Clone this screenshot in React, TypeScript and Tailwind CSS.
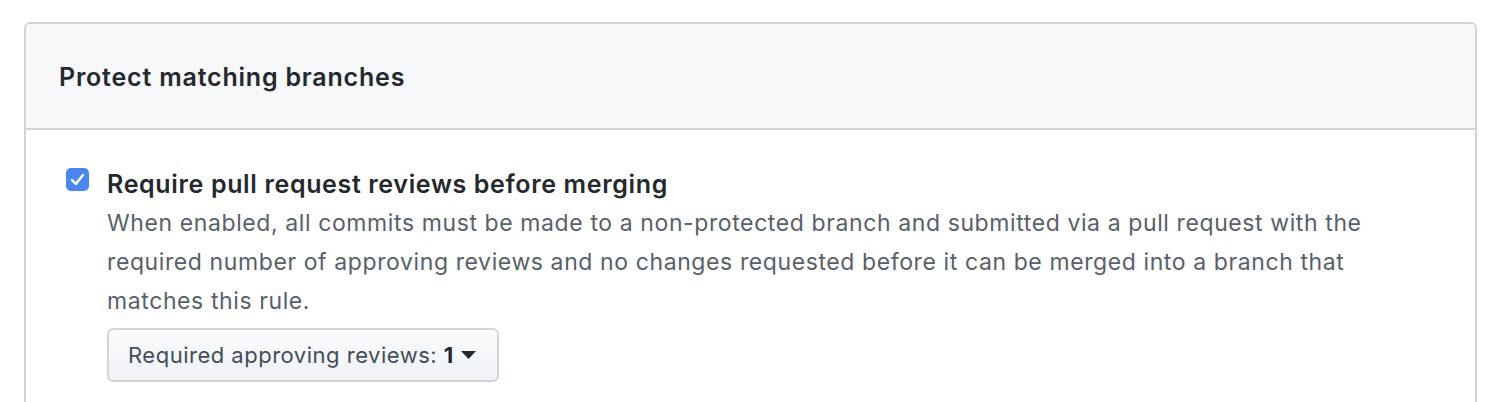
export default function App() {
  return (
    <div className="min-h-screen bg-white pt-[22px] pl-[24px] pr-[15px] font-['Inter',sans-serif] antialiased">
      <div className="rounded-t-[6px] border-2 border-b-0 border-[#d1d5da] overflow-hidden">
        {/* Header */}
        <div className="h-[106px] flex items-center px-[33px] bg-[#f6f8fa] border-b-2 border-[#d1d5da]">
          <h2 className="pt-[4px] text-[25px] tracking-[0.8px] font-semibold text-[#24292e]">Protect matching branches</h2>
        </div>

        {/* Body */}
        <div className="pt-[35px] pl-[40px] pr-[40px] pb-[40px] bg-white">
          <div className="flex gap-[18px]">
            <div className="pt-[3px]">
              <div className="w-[23px] h-[23px] rounded-[5px] bg-[#4a86f0] flex items-center justify-center">
                <svg width="19" height="19" viewBox="0 0 16 16" fill="none">
                  <path d="M3.4 8.6 L6.6 11.7 L12.6 4.2" stroke="white" strokeWidth="2.1" strokeLinecap="round" strokeLinejoin="round" />
                </svg>
              </div>
            </div>
            <div className="flex-1">
              <div className="text-[25px] leading-[38px] tracking-[0.65px] font-semibold text-[#24292e]">
                Require pull request reviews before merging
              </div>
              <p className="mt-[1px] text-[23px] leading-[39px] tracking-[0.6px] text-[#586069] max-w-[1300px]">
                When enabled, all commits must be made to a non-protected branch and submitted via a pull request with the required number of approving reviews and no changes requested before it can be merged into a branch that matches this rule.
              </p>
              <button className="mt-[7px] h-[54px] w-[392px] flex items-center pl-[19px] border-2 border-[#d1d5da] rounded-[6px] bg-gradient-to-b from-[#fafbfc] to-[#eff3f6] text-[22px] tracking-[0.5px] text-[#444d56]">
                <span>Required approving reviews:&nbsp;</span>
                <span className="font-bold text-[#24292e]">1</span>
                <svg className="ml-[7px]" width="15" height="8" viewBox="0 0 15 8">
                  <path d="M0 0 L15 0 L7.5 8 Z" fill="#24292e" />
                </svg>
              </button>
            </div>
          </div>
        </div>
      </div>
    </div>
  );
}
